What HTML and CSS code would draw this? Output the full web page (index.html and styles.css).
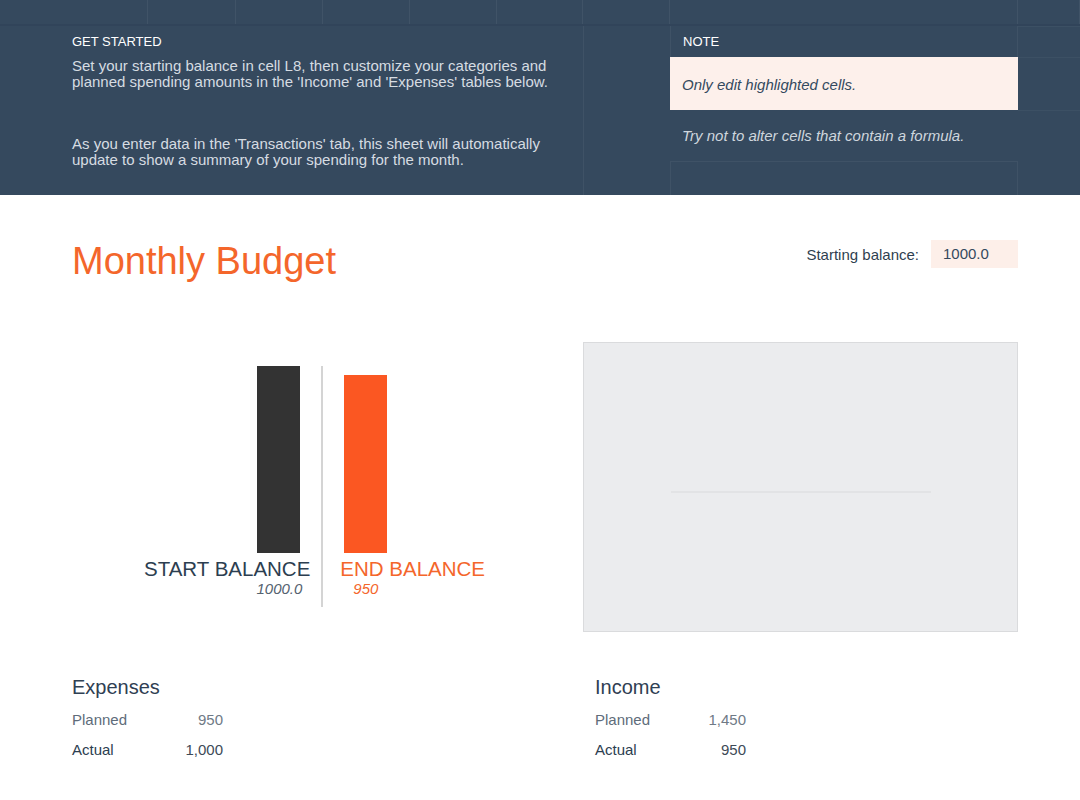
FILE: index.html
```html
<!DOCTYPE html>
<html lang="en">
<head>
    <meta charset="UTF-8">
    <meta name="viewport" content="width=device-width, initial-scale=1.0">
    <title>Monthly Budget</title>
    <link rel="stylesheet" href="styles.css">
</head>
<body>
    <header class="intro">
        <div class="intro-ruler">
            <span></span><span></span><span></span><span></span><span></span><span></span>
            <span></span><span></span><span></span>
        </div>
        <div class="intro-body">
            <div class="intro-heading">GET STARTED</div>
            <div class="intro-gap"></div>
            <div class="intro-heading note-col">NOTE</div>
            <div class="intro-edge"></div>

            <p class="intro-text">Set your starting balance in cell L8, then customize your categories and<br>planned spending amounts in the 'Income' and 'Expenses' tables below.</p>
            <div class="intro-gap"></div>
            <div class="note-box">Only edit highlighted cells.</div>
            <div class="intro-edge"></div>

            <p class="intro-text second">As you enter data in the 'Transactions' tab, this sheet will automatically<br>update to show a summary of your spending for the month.</p>
            <div class="intro-gap tall"></div>
            <div class="note-tip">Try not to alter cells that contain a formula.</div>
            <div class="intro-edge tall"></div>

            <div class="note-col"></div>
        </div>
    </header>

    <main class="sheet">
        <div class="title-row">
            <h1>Monthly Budget</h1>
            <div class="start-balance">
                <span class="start-label">Starting balance:</span>
                <span class="start-value">1000.0</span>
            </div>
        </div>

        <div class="charts-row">
            <div class="balance-col">
                <div class="balance-chart">
                    <div class="bal start">
                        <div class="bar-area"><div class="bar" style="height: 187px"></div></div>
                        <div class="bal-label">START BALANCE</div>
                        <div class="bal-value">1000.0</div>
                    </div>
                    <div class="bal-divider"></div>
                    <div class="bal end">
                        <div class="bar-area"><div class="bar" style="height: 178px"></div></div>
                        <div class="bal-label">END BALANCE</div>
                        <div class="bal-value">950</div>
                    </div>
                </div>
            </div>
            <div class="chart-box">
                <div class="chart-axis"></div>
            </div>
        </div>

        <div class="totals">
            <div class="total-block">
                <h2>Expenses</h2>
                <div class="total-row planned"><span>Planned</span><span class="num">950</span></div>
                <div class="total-row actual"><span>Actual</span><span class="num">1,000</span></div>
            </div>
            <div class="total-block">
                <h2>Income</h2>
                <div class="total-row planned"><span>Planned</span><span class="num">1,450</span></div>
                <div class="total-row actual"><span>Actual</span><span class="num">950</span></div>
            </div>
        </div>
    </main>
</body>
</html>
```

FILE: styles.css
```css
* {
    margin: 0;
    padding: 0;
    box-sizing: border-box;
}

body {
    font-family: 'Liberation Sans', Arial, sans-serif;
    background: white;
    color: #34495e;
    width: 1080px;
}

/* ---------- intro band ---------- */

.intro {
    background: #35495e;
    height: 195px;
}

.intro-ruler {
    display: grid;
    grid-template-columns: 148px 88px 87px 87px 87px 86px 87px 348px 62px;
    height: 26px;
    border-bottom: 2px solid #31445a;
}

.intro-ruler span {
    border-right: 1px solid rgba(255,255,255,0.06);
}

.intro-body {
    display: grid;
    grid-template-columns: 511px 87px 348px 62px;
    grid-template-rows: 31px 53px 52px 33px;
    margin-left: 72px;
}

.intro-heading {
    color: white;
    font-size: 13px;
    line-height: 31px;
}

.note-col {
    padding-left: 12px;
    border-left: 1px solid rgba(255,255,255,0.05);
    border-right: 1px solid rgba(255,255,255,0.05);
}

.intro-gap {
    border-left: 1px solid rgba(255,255,255,0.05);
}

.intro-edge {
    border-top: 1px solid rgba(255,255,255,0.04);
}

.intro-gap.tall,
.intro-edge.tall {
    grid-row: span 2;
}

.intro-text {
    color: #d6dce2;
    font-size: 15px;
    line-height: 16px;
    padding-top: 1px;
}

.intro-text.second {
    grid-row: span 2;
    padding-top: 26px;
}

.note-box {
    background: #fdf0eb;
    color: #34495e;
    font-size: 15px;
    font-style: italic;
    padding: 19px 12px 0;
}

.note-tip {
    color: #cfd6dd;
    font-size: 15px;
    font-style: italic;
    padding: 17px 12px 0;
    border-bottom: 1px solid rgba(255,255,255,0.05);
}

/* ---------- sheet ---------- */

.sheet {
    padding: 0 62px 0 72px;
}

.title-row {
    display: flex;
    justify-content: space-between;
    align-items: flex-start;
    margin-top: 42px;
}

.title-row h1 {
    color: #f4662b;
    font-size: 38px;
    font-weight: normal;
    line-height: 48px;
}

.start-balance {
    display: flex;
    align-items: center;
    gap: 12px;
    margin-top: 3px;
    font-size: 15px;
}

.start-label {
    color: #2f3f50;
}

.start-value {
    width: 87px;
    height: 28px;
    line-height: 28px;
    padding-left: 12px;
    background: #fdefe9;
    color: #34495e;
}

.charts-row {
    display: flex;
    margin-top: 57px;
}

.balance-col {
    width: 511px;
    flex: none;
    padding-top: 24px;
}

.balance-chart {
    display: flex;
    margin-left: 72px;
}

.bal {
    display: flex;
    flex-direction: column;
    padding-bottom: 10px;
}

.bal.start {
    align-items: flex-end;
}

.bar-area {
    height: 187px;
    display: flex;
    align-items: flex-end;
}

.bar {
    width: 43px;
}

.bal.start .bar {
    background: #333333;
    margin-right: 10px;
}

.bal.end .bar {
    background: #fb5722;
    margin-left: 4px;
}

.bal-label {
    font-size: 20.5px;
    line-height: 24px;
    margin-top: 4px;
}

.bal.start .bal-label {
    color: #2c3e50;
}

.bal.end .bal-label {
    color: #f4662b;
}

.bal-value {
    font-size: 15px;
    font-style: italic;
    line-height: 16px;
}

.bal.start .bal-value {
    color: #55626f;
    padding-right: 8px;
}

.bal.end .bal-value {
    color: #f4662b;
    padding-left: 13px;
}

.bal-divider {
    width: 2px;
    background: #d4d4d4;
    margin: 0 17px 0 11px;
}

.chart-box {
    width: 435px;
    height: 290px;
    flex: none;
    background: #ebecee;
    border: 1px solid #dadbdd;
    padding-top: 148px;
}

.chart-axis {
    width: 260px;
    height: 2px;
    margin-left: 87px;
    background: #e2e3e5;
}

/* ---------- totals ---------- */

.totals {
    display: flex;
    margin-top: 43px;
}

.total-block {
    width: 523px;
    flex: none;
}

.total-block + .total-block {
    width: auto;
}

.total-block h2 {
    font-size: 20px;
    font-weight: normal;
    line-height: 24px;
    color: #2f4053;
    margin-bottom: 6px;
}

.total-row {
    display: flex;
    justify-content: space-between;
    width: 151px;
    height: 30px;
    line-height: 30px;
    font-size: 15px;
}

.total-row.planned {
    color: #5e6c7a;
}

.total-row.planned .num {
    color: #6f7a86;
}

.total-row.actual {
    color: #2c3e50;
}

.total-row.actual .num {
    color: #3d4a57;
}
```
